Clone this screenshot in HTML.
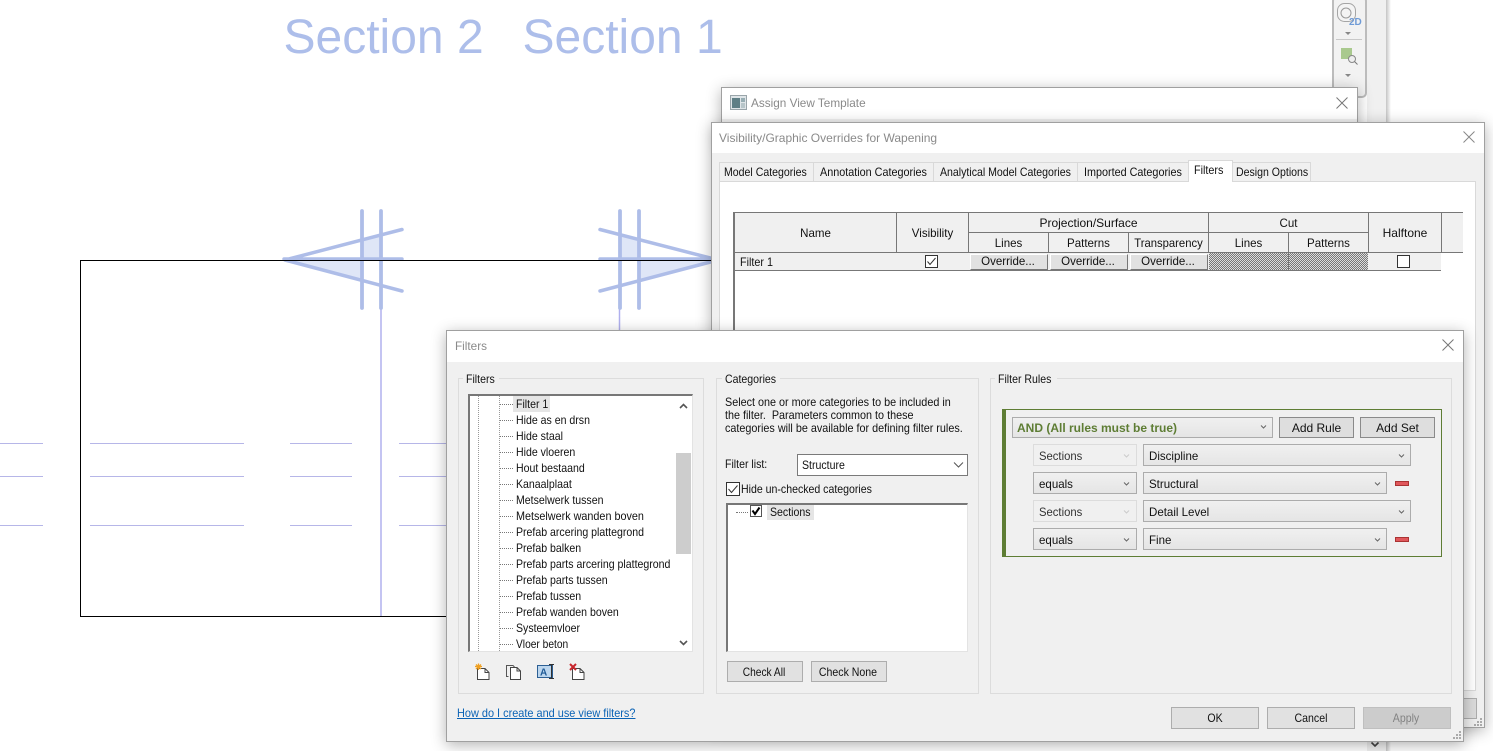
<!DOCTYPE html>
<html><head><meta charset="utf-8"><style>
html,body{margin:0;padding:0;width:1493px;height:751px;overflow:hidden;background:#fff}
body{position:relative;font-family:"Liberation Sans",sans-serif;font-size:12px;color:#111}
div,span,svg{position:absolute;box-sizing:border-box}
.t{white-space:nowrap;line-height:14px;height:14px;transform:scaleX(.88);transform-origin:0 50%}
.c{white-space:nowrap;line-height:14px;height:14px;text-align:center;transform:scaleX(.88);transform-origin:50% 50%}
.ttl{color:#8a8a8a;white-space:nowrap;line-height:14px;height:14px;transform:scaleX(.98);transform-origin:0 50%}
.s100{transform:scaleX(1)}
.s97{transform:scaleX(.96)}
.s94{transform:scaleX(.94)}
.s90{transform:scaleX(.9)}
.s85{transform:scaleX(.85)}
.dlg{background:#f0f0f0;border:1px solid #a0a0a0;box-shadow:0 3px 14px rgba(0,0,0,.3)}
.tb{left:0;top:0;right:0;background:#fff}
.tab{background:#f0f0f0;border:1px solid #d9d9d9;border-bottom:none;height:19px;top:162px}
.h{background:#f0f0f0}
.ln{background:#777}
.gb{border:1px solid #dcdcdc}
.gl{background:#f0f0f0;padding:0 3px}
.btn{background:#e1e1e1;border:1px solid #adadad}
.sel{background:linear-gradient(#f0f0f0,#e5e5e5);border:1px solid #acacac}
.ov{background:#e1e1e1;border:1px solid #fff;border-right:1px solid #777;border-bottom:1px solid #777;height:16px;top:254px;width:78px}
.dot{border-top:1px dotted #777;height:0}
.vd{border-left:1px dotted #999;width:0}
</style></head><body>

<div style="left:283.500px;top:10px;font-size:48px;line-height:55px;color:#adbeea;white-space:nowrap">Section 2</div>
<div style="left:522.500px;top:10px;font-size:48px;line-height:55px;color:#adbeea;white-space:nowrap">Section 1</div>

<svg style="left:0;top:0" width="1493" height="751" viewBox="0 0 1493 751">
<g stroke="#b6b6e8" stroke-width="1">
<path d="M0 443.500H43M90 443.500H244M290 443.500H352M399 443.500H450"/>
<path d="M0 476.500H43M90 476.500H244M290 476.500H352M399 476.500H450"/>
<path d="M0 525.500H43M90 525.500H244M290 525.500H352M399 525.500H450"/>
</g>
<path d="M381 309V616" stroke="#b0b0ee" stroke-width="1.500" fill="none"/>
<path d="M619.500 309V335" stroke="#b0b0ee" stroke-width="1.500" fill="none"/>
<g fill="#dfe6f7">
<path d="M362 239L381 234V259H362Z"/><path d="M290 261H362V281Z"/>
<path d="M620 234L639 239V259H620Z"/><path d="M639 261H712V261L639 281Z"/>
</g>
<g stroke="#aebde8" stroke-width="3.800" stroke-linecap="round" fill="none">
<path d="M362 211V308M381 211V308"/>
<path d="M620 211V308M639 211V308"/>
<path d="M285 260L402 229.500M285 260L402 291M284 259H402" stroke-width="3.500"/>
<path d="M718 260L600 229.500M718 260L600 291M718 259H600" stroke-width="3.500"/>
</g>
<path d="M80.500 616.500V260.500H720" fill="none" stroke="#000" stroke-width="1"/>
<path d="M80 616.500H450" fill="none" stroke="#000" stroke-width="1"/>
</svg>

<!-- right strip -->
<div style="left:1367px;top:0;width:19px;height:751px;background:#f0f0f0"></div>
<div style="left:1386px;top:0;width:5px;height:751px;background:linear-gradient(90deg,#c4c4c4,#fff)"></div>
<div style="left:1332px;top:-4px;width:35px;height:102px;background:#f2f2f2;border:2px solid #bcbcbc;border-radius:5px"></div>
<svg style="left:1332px;top:0" width="36" height="98" viewBox="0 0 36 98">
<rect x="5.500" y="3.500" width="18" height="18" rx="7" fill="#f4f4f4" stroke="#a5a5a5"/>
<circle cx="14" cy="13" r="5" fill="none" stroke="#999"/>
<text x="17" y="25" font-family="Liberation Sans" font-size="10" font-weight="bold" fill="#6f9bd6">2D</text>
<path d="M13 32h6l-3 3z" fill="#888"/>
<path d="M4 39.500H30" stroke="#c8c8c8"/>
<rect x="9" y="48" width="11" height="11" fill="#a9c98e"/>
<circle cx="20" cy="59" r="3.500" fill="#eee" stroke="#888"/>
<path d="M22.500 61.500l3 3" stroke="#777"/>
<path d="M13 74h6l-3 3z" fill="#888"/>
</svg>

<!-- bottom scroll arrow -->
<svg style="left:1368px;top:738px" width="18" height="13" viewBox="0 0 18 13"><path d="M3.500 3.500L7 7 10.500 3.500" fill="none" stroke="#444" stroke-width="1.600" transform="translate(0,1)"/></svg>

<!-- Assign View Template -->
<div class="dlg" style="left:721px;top:87px;width:637px;height:60px">
<div class="tb" style="height:31px"></div>
<svg style="left:8px;top:7px" width="17" height="15" viewBox="0 0 17 15"><rect x=".5" y=".5" width="16" height="14" fill="#dfe5e8" stroke="#9aa5aa"/><rect x="2" y="3" width="8" height="10" fill="#5f7f86"/><rect x="11" y="3" width="4" height="4" fill="#97adb3"/><rect x="11" y="8" width="4" height="5" fill="#b7c5c9"/></svg>
<div class="ttl" style="left:29px;top:8px">Assign View Template</div>
<svg style="left:614px;top:9px" width="12" height="12" viewBox="0 0 12 12"><path d="M.5.500L11.500 11.500M11.500.500L.5 11.500" stroke="#777" fill="none"/></svg>
</div>

<!-- Visibility dialog -->
<div class="dlg" style="left:711px;top:122px;width:774px;height:606px"></div>
<div class="tb" style="left:712px;top:123px;width:772px;height:30px;right:auto"></div>
<div class="ttl s100" style="left:719px;top:131px">Visibility/Graphic Overrides for Wapening</div>
<svg style="left:1463px;top:131px" width="12" height="12" viewBox="0 0 12 12"><path d="M.5.500L11.500 11.500M11.500.500L.5 11.500" stroke="#888" fill="none"/></svg>
<div style="left:719px;top:181px;width:757px;height:510px;background:#fff;border:1px solid #d9d9d9"></div>
<div class="tab" style="left:719px;width:95px"></div><div class="t" style="left:724px;top:165px">Model Categories</div>
<div class="tab" style="left:813px;width:121px"></div><div class="t s90" style="left:820px;top:165px">Annotation Categories</div>
<div class="tab" style="left:933px;width:145px"></div><div class="t" style="left:940px;top:165px">Analytical Model Categories</div>
<div class="tab" style="left:1077px;width:112px"></div><div class="t s90" style="left:1084px;top:165px">Imported Categories</div>
<div class="tab" style="left:1188px;width:45px;top:160px;height:22px;background:#fff"></div><div class="t s90" style="left:1194px;top:163px">Filters</div>
<div class="tab" style="left:1232px;width:79px"></div><div class="t" style="left:1236px;top:165px">Design Options</div>

<div class="h" style="left:733px;top:212px;width:730px;height:40px"></div>
<div class="h" style="left:735px;top:253px;width:706px;height:17px"></div>
<div class="ln" style="left:733px;top:212px;width:730px;height:1px"></div>
<div class="ln" style="left:733px;top:252px;width:730px;height:1px"></div>
<div class="ln" style="left:733px;top:270px;width:708px;height:1px"></div>
<div class="ln" style="left:733px;top:212px;width:2px;height:130px"></div>
<div class="ln" style="left:968px;top:232px;width:400px;height:1px"></div>
<div class="ln" style="left:896px;top:212px;width:1px;height:40px"></div>
<div class="ln" style="left:968px;top:212px;width:1px;height:40px"></div>
<div class="ln" style="left:1048px;top:232px;width:1px;height:20px"></div>
<div class="ln" style="left:1128px;top:232px;width:1px;height:20px"></div>
<div class="ln" style="left:1208px;top:212px;width:1px;height:40px"></div>
<div class="ln" style="left:1288px;top:232px;width:1px;height:20px"></div>
<div class="ln" style="left:1368px;top:212px;width:1px;height:40px"></div>
<div class="ln" style="left:1441px;top:212px;width:1px;height:40px"></div>
<div class="c s97" style="left:735px;top:226px;width:161px">Name</div>
<div class="c s97" style="left:897px;top:226px;width:71px">Visibility</div>
<div class="c s100" style="left:969px;top:216px;width:239px">Projection/Surface</div>
<div class="c s97" style="left:1209px;top:216px;width:159px">Cut</div>
<div class="c s100" style="left:1369px;top:226px;width:72px">Halftone</div>
<div class="c s97" style="left:969px;top:236px;width:79px">Lines</div>
<div class="c s97" style="left:1049px;top:236px;width:79px">Patterns</div>
<div class="c s94" style="left:1129px;top:236px;width:79px">Transparency</div>
<div class="c s97" style="left:1209px;top:236px;width:79px">Lines</div>
<div class="c s97" style="left:1289px;top:236px;width:79px">Patterns</div>
<div class="t s90" style="left:740px;top:255px">Filter 1</div>
<svg style="left:925px;top:255px" width="13" height="13" viewBox="0 0 13 13"><rect x=".5" y=".5" width="12" height="12" fill="#fff" stroke="#333"/><path d="M2.500 6.500L5 9.500 10.500 3" fill="none" stroke="#333"/></svg>
<div class="ov" style="left:970px"></div><div class="c s97" style="left:969px;top:254px;width:78px">Override...</div>
<div class="ov" style="left:1050px"></div><div class="c s97" style="left:1049px;top:254px;width:78px">Override...</div>
<div class="ov" style="left:1130px"></div><div class="c s97" style="left:1129px;top:254px;width:78px">Override...</div>
<div style="left:1209px;top:253px;width:159px;height:17px;background:repeating-conic-gradient(#777 0 25%,#ddd 0 50%) 0 0/2px 2px"></div>
<div class="ln" style="left:1288px;top:253px;width:1px;height:17px"></div>
<svg style="left:1397px;top:255px" width="13" height="13" viewBox="0 0 13 13"><rect x=".5" y=".5" width="12" height="12" fill="#fff" stroke="#333"/></svg>
<div class="btn" style="left:1400px;top:698px;width:77px;height:21px;background:#dcdcdc"></div>
<svg style="left:1472px;top:716px" width="11" height="11" viewBox="0 0 11 11" fill="#aaa"><path d="M8 2h2v2H8zM5 5h2v2H5zM8 5h2v2H8zM2 8h2v2H2zM5 8h2v2H5zM8 8h2v2H8z"/></svg>

<!-- Filters dialog -->
<div class="dlg" style="left:446px;top:330px;width:1018px;height:412px"></div>
<div class="tb" style="left:447px;top:331px;width:1016px;height:31px;right:auto"></div>
<div class="ttl" style="left:455px;top:339px">Filters</div>
<svg style="left:1442px;top:339px" width="12" height="12" viewBox="0 0 12 12"><path d="M.5.500L11.500 11.500M11.500.500L.5 11.500" stroke="#777" fill="none"/></svg>

<div class="gb" style="left:458px;top:378px;width:246px;height:316px"></div>
<div class="gl" style="left:463px;top:372px;width:36px;height:14px"></div><div class="t" style="left:466px;top:372px">Filters</div>
<div class="gb" style="left:716px;top:378px;width:263px;height:316px"></div>
<div class="gl" style="left:722px;top:372px;width:58px;height:14px"></div><div class="t" style="left:725px;top:372px">Categories</div>
<div class="gb" style="left:990px;top:378px;width:462px;height:316px"></div>
<div class="gl" style="left:995px;top:372px;width:62px;height:14px"></div><div class="t" style="left:998px;top:372px">Filter Rules</div>

<!-- filter list -->
<div style="left:468px;top:394px;width:225px;height:258px;background:#fff;border:1px solid #e3e3e3;border-top:2px solid #777;border-left:2px solid #777"></div>
<div class="vd" style="left:478px;top:396px;height:255px"></div>
<div class="vd" style="left:499px;top:396px;height:255px"></div>
<div style="left:676px;top:396px;width:15px;height:255px;background:#fff"></div>
<div style="left:676px;top:453px;width:15px;height:101px;background:#cdcdcd"></div>
<svg style="left:676px;top:396px" width="15" height="255" viewBox="0 0 15 255"><path d="M4 12L7.500 8.500 11 12M4 245L7.500 248.500 11 245" fill="none" stroke="#555" stroke-width="1.600"/></svg>
<div style="left:513px;top:396px;width:37px;height:16px;background:#e5e5e5"></div>
<div class="dot" style="left:500px;top:404px;width:13px"></div><div class="t" style="left:516px;top:397px">Filter 1</div>
<div class="dot" style="left:500px;top:420px;width:13px"></div><div class="t" style="left:516px;top:413px">Hide as en drsn</div>
<div class="dot" style="left:500px;top:436px;width:13px"></div><div class="t" style="left:516px;top:429px">Hide staal</div>
<div class="dot" style="left:500px;top:452px;width:13px"></div><div class="t" style="left:516px;top:445px">Hide vloeren</div>
<div class="dot" style="left:500px;top:468px;width:13px"></div><div class="t" style="left:516px;top:461px">Hout bestaand</div>
<div class="dot" style="left:500px;top:484px;width:13px"></div><div class="t" style="left:516px;top:477px">Kanaalplaat</div>
<div class="dot" style="left:500px;top:500px;width:13px"></div><div class="t" style="left:516px;top:493px">Metselwerk tussen</div>
<div class="dot" style="left:500px;top:516px;width:13px"></div><div class="t s90" style="left:516px;top:509px">Metselwerk wanden boven</div>
<div class="dot" style="left:500px;top:532px;width:13px"></div><div class="t" style="left:516px;top:525px">Prefab arcering plattegrond</div>
<div class="dot" style="left:500px;top:548px;width:13px"></div><div class="t" style="left:516px;top:541px">Prefab balken</div>
<div class="dot" style="left:500px;top:564px;width:13px"></div><div class="t" style="left:516px;top:557px">Prefab parts arcering plattegrond</div>
<div class="dot" style="left:500px;top:580px;width:13px"></div><div class="t" style="left:516px;top:573px">Prefab parts tussen</div>
<div class="dot" style="left:500px;top:596px;width:13px"></div><div class="t" style="left:516px;top:589px">Prefab tussen</div>
<div class="dot" style="left:500px;top:612px;width:13px"></div><div class="t" style="left:516px;top:605px">Prefab wanden boven</div>
<div class="dot" style="left:500px;top:628px;width:13px"></div><div class="t" style="left:516px;top:621px">Systeemvloer</div>
<div class="dot" style="left:500px;top:644px;width:13px"></div><div class="t s85" style="left:516px;top:637px">Vloer beton</div>

<!-- filter icons -->
<svg style="left:470px;top:659px" width="120" height="24" viewBox="0 0 120 24" fill="none">
<path d="M7.500 9.500H15L19 13.500V20.500H7.500Z" fill="#fff" stroke="#444"/><path d="M15 9.500V13.500H19" stroke="#444"/>
<path d="M8.500 4.500V11M5 7.500H12M6 5.500L11 10M11 5.500L6 10" stroke="#f0a020" stroke-width="1.300"/>
<path d="M38.500 17.500H36.500V6.500H43L44.500 8" stroke="#555"/><path d="M40.500 8.500H47L50.500 12V20.500H40.500Z" fill="#fff" stroke="#444"/><path d="M47 8.500V12H50.500" stroke="#444"/>
<rect x="67.500" y="6.500" width="15" height="12" fill="#bcd6ee" stroke="#2c5f94"/>
<text x="70" y="16.500" font-family="Liberation Sans" font-size="10" font-weight="bold" fill="#1f5a96">A</text>
<path d="M79 5.500H84M81.500 5.500V19.500M79 19.500H84" stroke="#333"/>
<path d="M102.500 9.500H110L114 13.500V20.500H102.500Z" fill="#fff" stroke="#444"/><path d="M110 9.500V13.500H114" stroke="#444"/>
<path d="M100 5L106 11M106 5L100 11" stroke="#c8262c" stroke-width="2"/>
</svg>
<div class="t s90" style="left:457px;top:706px;color:#0b63b5;text-decoration:underline;transform:scaleX(.91)">How do I create and use view filters?</div>

<!-- categories -->
<div class="t s90" style="left:725px;top:395px;transform:scaleX(.9)">Select one or more categories to be included in</div>
<div class="t s90" style="left:725px;top:408px">the filter.&nbsp; Parameters common to these</div>
<div class="t s90" style="left:725px;top:421px;transform:scaleX(.9)">categories will be available for defining filter rules.</div>
<div class="t" style="left:725px;top:457px">Filter list:</div>
<div style="left:797px;top:454px;width:171px;height:22px;background:#fff;border:1px solid #7a7a7a"></div>
<div class="t" style="left:802px;top:458px">Structure</div>
<svg style="left:953px;top:461px" width="11" height="8" viewBox="0 0 11 8"><path d="M1 1.500L5.500 6 10 1.500" fill="none" stroke="#555"/></svg>
<svg style="left:726px;top:482px" width="14" height="14" viewBox="0 0 14 14"><rect x=".5" y=".5" width="13" height="13" fill="#fff" stroke="#333"/><path d="M2.500 7L5.500 10.500 11.500 3.500" fill="none" stroke="#333"/></svg>
<div class="t" style="left:741px;top:482px">Hide un-checked categories</div>
<div style="left:726px;top:503px;width:242px;height:149px;background:#fff;border:1px solid #e3e3e3;border-top:2px solid #777;border-left:2px solid #777"></div>
<div class="dot" style="left:736px;top:512px;width:12px"></div>
<svg style="left:750px;top:505px" width="12" height="12" viewBox="0 0 12 12"><rect x=".5" y=".5" width="11" height="11" fill="#fff" stroke="#555"/><path d="M2.500 5.500L5 9 9.500 2.500" fill="none" stroke="#000" stroke-width="2"/></svg>
<div style="left:767px;top:505px;width:47px;height:15px;background:#e5e5e5"></div>
<div class="t" style="left:770px;top:505px">Sections</div>
<div class="btn" style="left:727px;top:661px;width:76px;height:21px"></div><div class="c s85" style="left:726px;top:665px;width:76px">Check All</div>
<div class="btn" style="left:811px;top:661px;width:76px;height:21px"></div><div class="c" style="left:810px;top:665px;width:76px">Check None</div>

<!-- filter rules -->
<div style="left:1002px;top:409px;width:440px;height:148px;border:1px solid #5e7d34;border-left:4px solid #5e7d34"></div>
<div class="sel" style="left:1012px;top:417px;width:261px;height:21px"></div>
<div class="t s100" style="left:1017px;top:421px;color:#5e7d34;font-weight:bold">AND (All rules must be true)</div>
<div class="btn" style="left:1279px;top:417px;width:75px;height:21px;background:#dedede;border-color:#8a8a8a"></div><div class="c s100" style="left:1279px;top:421px;width:75px">Add Rule</div>
<div class="btn" style="left:1360px;top:417px;width:75px;height:21px;background:#dedede;border-color:#8a8a8a"></div><div class="c s100" style="left:1360px;top:421px;width:75px">Add Set</div>

<div style="left:1033px;top:444px;width:104px;height:22px;background:#f0f0f0;border:1px solid #dcdcdc"></div><div class="t s94" style="left:1039px;top:449px;color:#333">Sections</div>
<div class="sel" style="left:1143px;top:444px;width:268px;height:22px"></div><div class="t s97" style="left:1149px;top:449px">Discipline</div>
<div class="sel" style="left:1033px;top:472px;width:104px;height:22px"></div><div class="t s97" style="left:1039px;top:477px">equals</div>
<div class="sel" style="left:1143px;top:472px;width:244px;height:22px"></div><div class="t s97" style="left:1149px;top:477px">Structural</div>
<div style="left:1033px;top:500px;width:104px;height:22px;background:#f0f0f0;border:1px solid #dcdcdc"></div><div class="t s94" style="left:1039px;top:505px;color:#333">Sections</div>
<div class="sel" style="left:1143px;top:500px;width:268px;height:22px"></div><div class="t s97" style="left:1149px;top:505px">Detail Level</div>
<div class="sel" style="left:1033px;top:528px;width:104px;height:22px"></div><div class="t s97" style="left:1039px;top:533px">equals</div>
<div class="sel" style="left:1143px;top:528px;width:244px;height:22px"></div><div class="t s97" style="left:1149px;top:533px">Fine</div>
<div style="left:1395px;top:481px;width:14px;height:5px;background:#e0575b;border:1px solid #a33"></div>
<div style="left:1395px;top:537px;width:14px;height:5px;background:#e0575b;border:1px solid #a33"></div>
<svg style="left:990px;top:400px" width="460" height="170" viewBox="0 0 460 170" fill="none" stroke="#666">
<path d="M271 25.500L273.500 28 276 25.500"/>
<path d="M409 54.500L411.500 57 414 54.500"/>
<path d="M134 54.500L136.500 57 139 54.500" stroke="#ccc"/>
<path d="M134 82.500L136.500 85 139 82.500"/>
<path d="M385 82.500L387.500 85 390 82.500"/>
<path d="M409 110.500L411.500 113 414 110.500"/>
<path d="M134 110.500L136.500 113 139 110.500" stroke="#ccc"/>
<path d="M134 138.500L136.500 141 139 138.500"/>
<path d="M385 138.500L387.500 141 390 138.500"/>
</svg>

<!-- footer -->
<div class="btn" style="left:1171px;top:707px;width:88px;height:22px"></div><div class="c" style="left:1171px;top:711px;width:88px">OK</div>
<div class="btn" style="left:1267px;top:707px;width:88px;height:22px"></div><div class="c" style="left:1267px;top:711px;width:88px">Cancel</div>
<div class="btn" style="left:1363px;top:707px;width:88px;height:22px;background:#cccccc;border-color:#bfbfbf"></div><div class="c" style="left:1362px;top:711px;width:88px;color:#838383">Apply</div>
<svg style="left:1451px;top:729px" width="11" height="11" viewBox="0 0 11 11" fill="#aaa"><path d="M8 2h2v2H8zM5 5h2v2H5zM8 5h2v2H8zM2 8h2v2H2zM5 8h2v2H5zM8 8h2v2H8z"/></svg>

</body></html>
